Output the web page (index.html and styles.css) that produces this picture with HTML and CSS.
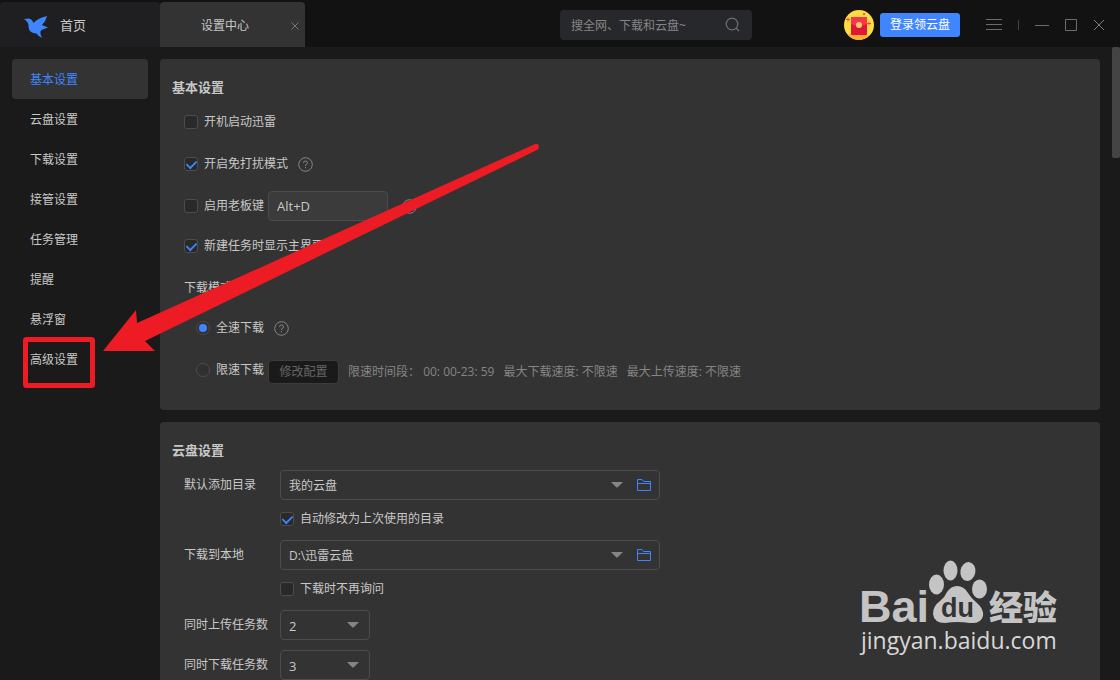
FILE: index.html
```html
<!DOCTYPE html>
<html lang="zh-CN">
	<head>
		<meta charset="utf-8">
		<title>设置中心</title>
		<link rel="stylesheet" href="styles.css">
	</head>
	<body>
		<!--top bar-->
		<header class="topbar">
			<a class="tab tab-home" href="#home">
				<svg class="logo" width="26" height="24" viewBox="0 0 26 24" aria-hidden="true">
					<path fill="#3f85ff" d="M0 4 L5 3.500 Q8 4 9.500 8 Q14 3 23 1 Q22 6 18 10 L24 12.500 L17.500 15 Q15 17 18 23 Q14 21 12.500 18.500 Q5 18 4.500 12 Q5 7 0 4 Z"/>
				</svg>
				首页
			</a>
			<div class="tab tab-active">
				<span class="tab-name">设置中心</span>
				<button type="button" class="tab-close" aria-label="关闭标签">
					<svg width="8" height="8" viewBox="0 0 8 8"><path d="M.5 .5 L7.5 7.5 M7.5 .5 L.5 7.5" stroke="#777"/></svg>
				</button>
			</div>
			<div class="search">
				<input type="text" class="search-input" placeholder="搜全网、下载和云盘~" aria-label="搜索">
				<button type="button" class="icon-btn" aria-label="搜索">
					<svg width="16" height="16" viewBox="0 0 16 16" fill="none" stroke="#687078" stroke-width="1.2"><circle cx="7" cy="7" r="5.8"/><path d="M11 11 L14 14"/></svg>
				</button>
			</div>
			<div class="account">
				<svg width="30" height="30" viewBox="0 0 30 30" aria-hidden="true">
					<circle cx="15" cy="15" r="15" fill="#ffdc42"/>
					<path fill="#ffad32" d="M4 25 Q8 22 12 25 L25 25 Q21 30 15 30 Q8 30 4 25 Z"/>
					<rect x="7" y="7" width="16" height="18" rx="1" fill="#df1736"/>
					<path fill="#f83549" d="M7 8 Q7 7 8 7 H22 Q23 7 23 8 V14 Q15 18 7 14 Z"/>
					<circle cx="15" cy="15" r="3" fill="#ffcb74"/>
					<path stroke="#f0513b" d="M2 9.500 H6 M4 7.500 V11.500 M23 13.500 H27 M25 11.500 V15.500"/>
					<circle cx="20" cy="4" r="1" fill="#ee3434"/>
				</svg>
				<button type="button" class="login">登录领云盘</button>
			</div>
			<div class="window-tools">
				<button type="button" class="icon-btn" aria-label="菜单">
					<svg width="16" height="12" viewBox="0 0 16 12"><path d="M0 .5 H16 M0 5.500 H16 M0 10.500 H16" stroke="#686c73"/></svg>
				</button>
				<span class="divider"></span>
				<button type="button" class="icon-btn" aria-label="最小化">
					<svg width="14" height="12" viewBox="0 0 14 12"><path d="M0 6.500 H14" stroke="#686c73"/></svg>
				</button>
				<button type="button" class="icon-btn" aria-label="最大化">
					<svg width="12" height="12" viewBox="0 0 12 12"><path d="M.5 .5 H11.500 V11.500 H.5 Z" fill="none" stroke="#686c73"/></svg>
				</button>
				<button type="button" class="icon-btn" aria-label="关闭">
					<svg width="12" height="12" viewBox="0 0 12 12"><path d="M1 1 L11 11 M11 1 L1 11" stroke="#7a7d82"/></svg>
				</button>
			</div>
		</header>
		<!--/top bar-->
		<div class="page">
			<nav class="sidebar">
				<a class="current" href="#basic">基本设置</a>
				<a href="#cloud">云盘设置</a>
				<a href="#download">下载设置</a>
				<a href="#takeover">接管设置</a>
				<a href="#tasks">任务管理</a>
				<a href="#remind">提醒</a>
				<a href="#float">悬浮窗</a>
				<a href="#advanced">高级设置</a>
			</nav>
			<main class="content">
				<!--basic settings-->
				<section class="card" id="basic">
					<h2>基本设置</h2>
					<div class="row">
						<label class="check"><input type="checkbox">开机启动迅雷</label>
					</div>
					<div class="row">
						<label class="check"><input type="checkbox" checked>开启免打扰模式</label>
						<svg class="help" width="15" height="15" viewBox="0 0 15 15"><circle cx="7.500" cy="7.500" r="6.800"/><path d="M5.500 6 Q5.500 4 7.500 4 Q9.500 4 9.500 5.800 Q9.500 7 7.500 8 V9 M7.500 10 V11.200"/></svg>
					</div>
					<div class="row">
						<label class="check"><input type="checkbox">启用老板键</label>
						<input type="text" class="hotkey" value="Alt+D" aria-label="老板键">
						<svg class="help" width="15" height="15" viewBox="0 0 15 15"><circle cx="7.500" cy="7.500" r="6.800"/><path d="M5.500 6 Q5.500 4 7.500 4 Q9.500 4 9.500 5.800 Q9.500 7 7.500 8 V9 M7.500 10 V11.200"/></svg>
					</div>
					<div class="row row-near">
						<label class="check"><input type="checkbox" checked>新建任务时显示主界面</label>
					</div>
					<div class="row">下载模式</div>
					<div class="row row-near row-sub">
						<label class="check"><input type="radio" name="mode" checked>全速下载</label>
						<svg class="help" width="15" height="15" viewBox="0 0 15 15"><circle cx="7.500" cy="7.500" r="6.800"/><path d="M5.500 6 Q5.500 4 7.500 4 Q9.500 4 9.500 5.800 Q9.500 7 7.500 8 V9 M7.500 10 V11.200"/></svg>
					</div>
					<div class="row row-sub">
						<label class="check"><input type="radio" name="mode">限速下载</label>
						<div class="limits">
							<button type="button" class="config" disabled>修改配置</button>
							<span>限速时间段：&nbsp;00: 00-23: 59</span>
							<span>最大下载速度: 不限速</span>
							<span>最大上传速度: 不限速</span>
						</div>
					</div>
				</section>
				<!--cloud settings-->
				<section class="card" id="cloud">
					<h2>云盘设置</h2>
					<div class="form">
						<label for="clouddir">默认添加目录</label>
						<div class="field">
							<select id="clouddir"><option>我的云盘</option></select>
							<svg class="arrow" width="12" height="6" viewBox="0 0 12 6"><path d="M0 0 H12 L7 5 Q6 6 5 5 Z"/></svg>
							<button type="button" class="icon-btn" aria-label="选择目录">
								<svg width="16" height="14" viewBox="0 0 16 14"><path d="M1.500 1.500 H6 L7.500 3.500 H14.500 V12.500 H1.500 Z M1.500 5.500 H14.500" fill="none" stroke="#3f85ff"/></svg>
							</button>
						</div>
						<label class="check option"><input type="checkbox" checked>自动修改为上次使用的目录</label>
						<label for="localdir">下载到本地</label>
						<div class="field">
							<select id="localdir"><option>D:\迅雷云盘</option></select>
							<svg class="arrow" width="12" height="6" viewBox="0 0 12 6"><path d="M0 0 H12 L7 5 Q6 6 5 5 Z"/></svg>
							<button type="button" class="icon-btn" aria-label="选择目录">
								<svg width="16" height="14" viewBox="0 0 16 14"><path d="M1.500 1.500 H6 L7.500 3.500 H14.500 V12.500 H1.500 Z M1.500 5.500 H14.500" fill="none" stroke="#3f85ff"/></svg>
							</button>
						</div>
						<label class="check option"><input type="checkbox">下载时不再询问</label>
						<label for="uploads">同时上传任务数</label>
						<div class="field field-short">
							<select id="uploads"><option>2</option></select>
							<svg class="arrow" width="12" height="6" viewBox="0 0 12 6"><path d="M0 0 H12 L7 5 Q6 6 5 5 Z"/></svg>
						</div>
						<label class="spaced" for="downloads">同时下载任务数</label>
						<div class="field field-short spaced">
							<select id="downloads"><option>3</option></select>
							<svg class="arrow" width="12" height="6" viewBox="0 0 12 6"><path d="M0 0 H12 L7 5 Q6 6 5 5 Z"/></svg>
						</div>
					</div>
				</section>
			</main>
			<div class="scrollbar"></div>
		</div>
		<!--arrow and frame round the last menu item-->
		<svg class="marker" width="560" height="400" viewBox="0 0 560 400" aria-hidden="true">
			<path fill="#ed1c24" d="M103 351 L136 310 L137 323 L535 144 Q538 143 539 146 Q539 149 537 150 L145 341 L155 351 Z"/>
			<rect x="25.500" y="339.500" width="67" height="46" rx="1" fill="none" stroke="#ed1c24" stroke-width="5"/>
		</svg>
		<!--watermark-->
		<svg class="watermark" width="220" height="105" viewBox="0 0 220 105">
			<g fill="#c4c4c4">
				<text class="mark-bai" x="4" y="67">Bai</text>
				<ellipse cx="81.500" cy="29.500" rx="7.500" ry="10"/>
				<ellipse cx="95.500" cy="15.500" rx="7" ry="10"/>
				<ellipse cx="113" cy="16.500" rx="7.500" ry="9.500" transform="rotate(10 113 16)"/>
				<ellipse cx="124.500" cy="34" rx="7.500" ry="9.500"/>
				<path d="M102 31 Q109 31 113 38 Q116 43 122 48 Q129 54 128 61 Q126 69 115 68 Q102 66 90 68 Q79 68 78 59 Q78 51 85 46 Q90 42 92 37 Q96 31 102 31 Z"/>
				<text class="mark-cn" x="134" y="65">经验</text>
			</g>
			<text class="mark-du" x="86" y="62">du</text>
			<text class="mark-url" x="6" y="94">jingyan.baidu.com</text>
		</svg>
	</body>
</html>
```
FILE: styles.css
```css
*{
	box-sizing:border-box;
}
body{
	display:flex;
	flex-direction:column;
	position:relative;
	height:100vh;
	margin:0;
	overflow:hidden;
	background:#1a1a1a;
	color:#c8c8c8;
	font-family:"Open Sans", "Noto Sans CJK SC", sans-serif;
	font-size:12px;
	line-height:16px;
}
svg{
	display:block;
	flex:none;
}
a{
	color:inherit;
	text-decoration:none;
}
button, input, select{
	margin:0;
	color:inherit;
	font:inherit;
}
.topbar{
	display:flex;
	align-items:center;
	flex:none;
	height:47px;
	padding:2px 15px 0 0;
	background:#121212;
}
.tab{
	display:flex;
	align-items:center;
	align-self:stretch;
	border-radius:4px 4px 0 0;
}
.tab-home{
	gap:10px;
	width:160px;
	padding-left:24px;
	background:#1f1f21;
	font-size:13px;
}
.logo{
	margin-top:4px;
}
.tab-active{
	width:145px;
	padding:2px 6px 0 41px;
	background:#333;
}
.tab-name{
	flex:1;
}
.tab-close, .icon-btn{
	padding:0;
	border:0;
	background:none;
}
.search{
	display:flex;
	align-items:center;
	width:192px;
	height:30px;
	margin:0 92px 0 auto;
	padding:0 11px;
	border-radius:4px;
	background:#27282c;
}
.search-input{
	flex:1;
	min-width:0;
	padding:2px 0 0;
	border:0;
	outline:none;
	background:none;
}
.search-input::placeholder{
	color:#858585;
}
.account{
	display:flex;
	align-items:center;
	gap:6px;
}
.login{
	width:80px;
	height:24px;
	padding:1px 0 0;
	border:0;
	border-radius:3px;
	background:#3f85ff;
	color:#fff;
}
.window-tools{
	display:flex;
	align-items:center;
	gap:16px;
	margin-left:26px;
}
.divider{
	width:1px;
	height:10px;
	background:#444;
}
.page{
	display:flex;
	flex:1;
	min-height:0;
}
.sidebar{
	flex:none;
	width:160px;
	padding:12px;
}
.sidebar a{
	display:block;
	padding:2px 0 0 18px;
	border-radius:4px;
	line-height:38px;
}
.sidebar .current{
	background:#333;
	color:#3f85ff;
}
.content{
	flex:1;
	min-width:0;
	padding-top:12px;
	overflow:hidden;
}
.scrollbar{
	width:8px;
	height:111px;
	margin-left:12px;
	border-radius:2px;
	background:#444;
}
.card{
	margin-bottom:12px;
	padding:20px 12px 25px;
	border-radius:4px;
	background:#333;
}
h2{
	margin:0;
	font-size:13px;
	line-height:16px;
}
.row{
	display:flex;
	align-items:center;
	height:30px;
	margin-top:12px;
	padding-left:12px;
}
.row-near{
	margin-top:10px;
}
.row-sub{
	padding-left:24px;
}
.check{
	display:flex;
	align-items:center;
	gap:6px;
}
.check input{
	display:grid;
	place-items:center;
	appearance:none;
	width:14px;
	height:14px;
	border:1px solid #4c4c4c;
	border-radius:3px;
	background:#292929;
}
.check input[type="radio"]{
	border-radius:50%;
	background:#303030;
}
.check input[type="checkbox"]:checked::before{
	content:"";
	width:9px;
	height:5px;
	margin-bottom:2px;
	border:solid #3f85ff;
	border-width:0 0 2px 2px;
	transform:rotate(-45deg) scale(.9);
}
.check input[type="radio"]:checked::before{
	content:"";
	width:8px;
	height:8px;
	border-radius:50%;
	background:#3f85ff;
}
.help{
	margin-left:10px;
	fill:none;
	stroke:#858585;
}
.hotkey{
	width:120px;
	height:30px;
	margin:0 4px;
	padding:0 8px;
	border:1px solid #4c4c4c;
	border-radius:4px;
	background:#3b3b3b;
	font-size:13px;
}
.limits{
	display:flex;
	align-items:center;
	gap:9px;
	padding:4px 0 0 4px;
	color:#858585;
}
.config{
	width:71px;
	height:24px;
	padding:0;
	border:1px solid #3c3c3c;
	border-radius:4px;
	background:#1a1a1a;
	color:#666;
}
.form{
	display:grid;
	grid-template-columns:96px 1fr;
	align-items:center;
	margin-top:12px;
	padding-left:12px;
}
.field{
	display:flex;
	align-items:center;
	width:380px;
	height:30px;
	padding-right:7px;
	border:1px solid #4c4c4c;
	border-radius:4px;
}
.field-short{
	width:90px;
	padding-right:10px;
}
.field select{
	flex:1;
	min-width:0;
	height:28px;
	padding:1px 8px 0;
	border:0;
	outline:none;
	appearance:none;
	background:none;
}
.field-short select{
	font-size:13px;
}
.arrow{
	fill:#858585;
}
.field .icon-btn{
	margin-left:13px;
}
.option{
	grid-column:2;
	height:30px;
	margin:4px 0 6px;
}
.spaced{
	margin-top:10px;
}
.marker{
	position:absolute;
	top:0;
	left:0;
	pointer-events:none;
}
.watermark{
	position:absolute;
	right:45px;
	bottom:20px;
	pointer-events:none;
}
.mark-bai{
	font:bold 45px "Liberation Sans", sans-serif;
}
.mark-cn{
	font:900 34px "Noto Sans CJK SC", sans-serif;
}
.mark-du{
	fill:#333;
	font:bold 27px "Liberation Sans", sans-serif;
}
.mark-url{
	fill:#d8d8d8;
	font:500 23px "Open Sans", sans-serif;
}
```
